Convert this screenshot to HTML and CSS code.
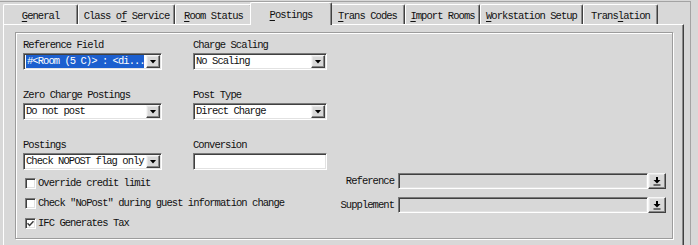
FILE: index.html
```html
<!DOCTYPE html>
<html>
<head>
<meta charset="utf-8">
<title>Postings</title>
<link rel="stylesheet" href="styles.css">
</head>
<body>
<div class="frame">
  <div class="tabs">
    <div class="tab t-general"><u>G</u>eneral</div>
    <div class="tab t-cos">Class o<u>f</u> Service</div>
    <div class="tab t-room"><u>R</u>oom Status</div>
    <div class="tab t-post active"><u>P</u>ostings</div>
    <div class="tab t-trans"><u>T</u>rans Codes</div>
    <div class="tab t-import"><u>I</u>mport Rooms</div>
    <div class="tab t-ws"><u>W</u>orkstation Setup</div>
    <div class="tab t-tl">Trans<u>l</u>ation</div>
  </div>
  <div class="panel">
    <div class="group">
      <div class="fields">
        <div class="field">
          <div class="label">Reference Field</div>
          <div class="combo sunken wide"><span class="value sel">#&lt;Room (5 C)&gt; : &lt;di...</span><span class="drop raised"></span></div>
        </div>
        <div class="field">
          <div class="label">Charge Scaling</div>
          <div class="combo sunken narrow white"><span class="value">No Scaling</span><span class="drop raised"></span></div>
        </div>
        <div class="field">
          <div class="label">Zero Charge Postings</div>
          <div class="combo sunken wide white"><span class="value">Do not post</span><span class="drop raised"></span></div>
        </div>
        <div class="field">
          <div class="label">Post Type</div>
          <div class="combo sunken narrow white"><span class="value">Direct Charge</span><span class="drop raised"></span></div>
        </div>
        <div class="field">
          <div class="label">Postings</div>
          <div class="combo sunken wide white"><span class="value">Check NOPOST flag only</span><span class="drop raised"></span></div>
        </div>
        <div class="field">
          <div class="label">Conversion</div>
          <div class="textbox sunken narrow white"></div>
        </div>
      </div>
      <div class="bottom">
        <div class="checks">
          <label class="check"><span class="box sunken"></span><span>Override credit limit</span></label>
          <label class="check"><span class="box sunken"></span><span>Check "NoPost" during guest information change</span></label>
          <label class="check"><span class="box sunken"><svg class="tick" width="7" height="7" viewBox="0 0 7 7"><path d="M0.5 3.2 L2.6 5.4 L6.5 1.2" fill="none" stroke="#3a3a3a" stroke-width="1.5"/></svg></span><span>IFC Generates Tax</span></label>
        </div>
        <div class="lookups">
          <div class="lk-label">Reference</div>
          <div class="lk-input sunken"></div>
          <div class="lk-btn raised"><svg width="8" height="9" viewBox="0 0 8 9"><rect x="3" y="0" width="2" height="3" fill="#000"/><path d="M0.5 3h7L4 6.6z" fill="#000"/><rect x="0.5" y="7.5" width="7" height="1" fill="#000"/></svg></div>
          <div class="lk-label">Supplement</div>
          <div class="lk-input sunken"></div>
          <div class="lk-btn raised"><svg width="8" height="9" viewBox="0 0 8 9"><rect x="3" y="0" width="2" height="3" fill="#000"/><path d="M0.5 3h7L4 6.6z" fill="#000"/><rect x="0.5" y="7.5" width="7" height="1" fill="#000"/></svg></div>
        </div>
      </div>
    </div>
  </div>
</div>
</body>
</html>
```
FILE: styles.css
```css
html, body {
  margin: 0;
  padding: 0;
  width: 698px;
  height: 245px;
  overflow: hidden;
  background: #d8d8d8;
}
body {
  font-family: "Liberation Mono", "DejaVu Sans Mono", monospace;
  font-size: 10.5px;
  letter-spacing: -0.95px;
  line-height: 12px;
  color: #111;
}
.frame {
  box-sizing: border-box;
  margin-top: 1px;
  width: 691px;
  height: 244px;
  border-top: 1px solid #a3a3a3;
  border-right: 1px solid #a3a3a3;
}
.tabs {
  display: flex;
  align-items: flex-end;
  height: 22px;
  padding-left: 3px;
  position: relative;
  z-index: 1;
}
.tab {
  box-sizing: border-box;
  height: 20px;
  border-top: 1px solid #fff;
  border-left: 1px solid #fff;
  border-right: 1px solid #404040;
  border-radius: 2px 2px 0 0;
  box-shadow: inset -1px 0 0 #8a8a8a;
  text-align: center;
  padding-top: 5px;
  white-space: nowrap;
  background: #d8d8d8;
}
.tab u { text-decoration-thickness: 1px; text-underline-offset: 2px; }
.t-general { width: 75px; }
.t-cos { width: 97px; }
.t-room { width: 77px; }
.t-post { width: 78px; }
.t-trans { width: 75px; }
.t-import { width: 75px; }
.t-ws { width: 103px; }
.t-tl { width: 75px; }
.tab.active {
  width: 82px;
  height: 23px;
  margin: 0 -2px -1px;
  padding-top: 6px;
  position: relative;
  z-index: 2;
}
.panel {
  box-sizing: border-box;
  margin-left: 3px;
  width: 681px;
  height: 221px;
  border-top: 1px solid #fff;
  border-left: 1px solid #fff;
  border-right: 1px solid #404040;
  box-shadow: inset -1px 0 0 #8a8a8a;
  padding: 7px 0 0 11px;
}
.group {
  box-sizing: border-box;
  width: 658px;
  height: 207px;
  border: 1px solid #9c9c9c;
  box-shadow: inset 1px 1px 0 #fff, 1px 1px 0 #fff;
  padding: 6px 6px 0 7px;
}
.fields {
  display: grid;
  grid-template-columns: 170px 134px;
  row-gap: 19px;
}
.field {
  display: flex;
  flex-direction: column;
}
.label {
  height: 12px;
  margin-bottom: 2px;
  white-space: nowrap;
}
.sunken {
  border: 1px solid;
  border-color: #7a7a7a #fff #fff #7a7a7a;
  box-shadow: inset 1px 1px 0 #404040, inset -1px -1px 0 #e2e2e2;
}
.raised {
  border: 1px solid;
  border-color: #f6f6f6 #404040 #404040 #f6f6f6;
  box-shadow: inset -1px -1px 0 #868686, inset 1px 1px 0 #e6e6e6;
  background: #d8d8d8;
}
.combo, .textbox {
  box-sizing: border-box;
  height: 17px;
  padding: 1px;
  display: flex;
  background: #fff;
}
.wide { width: 139px; }
.narrow { width: 134px; }
.white { background: #fff; }
.value {
  flex: 1;
  min-width: 0;
  padding-left: 1px;
  line-height: 13px;
  white-space: nowrap;
  overflow: hidden;
}
.value.sel {
  background: #1c5fcf;
  color: #fff;
  margin: 0 2px 0 1px;
}
.drop {
  box-sizing: border-box;
  width: 14px;
  height: 13px;
  display: flex;
  align-items: center;
  justify-content: center;
}
.drop::after {
  content: "";
  width: 7px;
  height: 4px;
  background: #000;
  clip-path: polygon(0 0, 100% 0, 50% 100%);
}
.bottom {
  display: flex;
  margin-top: 3px;
}
.checks {
  display: flex;
  flex-direction: column;
  margin-left: 2px;
}
.check {
  display: flex;
  align-items: center;
  gap: 2px;
  height: 20px;
  white-space: nowrap;
}
.box {
  box-sizing: border-box;
  width: 11px;
  height: 11px;
  background: #fff;
  display: flex;
  align-items: center;
  justify-content: center;
}
.tick { display: block; }
.lookups {
  margin-left: auto;
  display: grid;
  grid-template-columns: auto 250px 18px;
  grid-auto-rows: 16px;
  row-gap: 8px;
  align-items: center;
}
.lk-label {
  text-align: right;
  padding-right: 4px;
  white-space: nowrap;
}
.lk-input {
  box-sizing: border-box;
  height: 16px;
  background: #d8d8d8;
}
.lk-btn {
  box-sizing: border-box;
  height: 16px;
  display: flex;
  align-items: center;
  justify-content: center;
}
.lk-btn svg { display: block; }
```
